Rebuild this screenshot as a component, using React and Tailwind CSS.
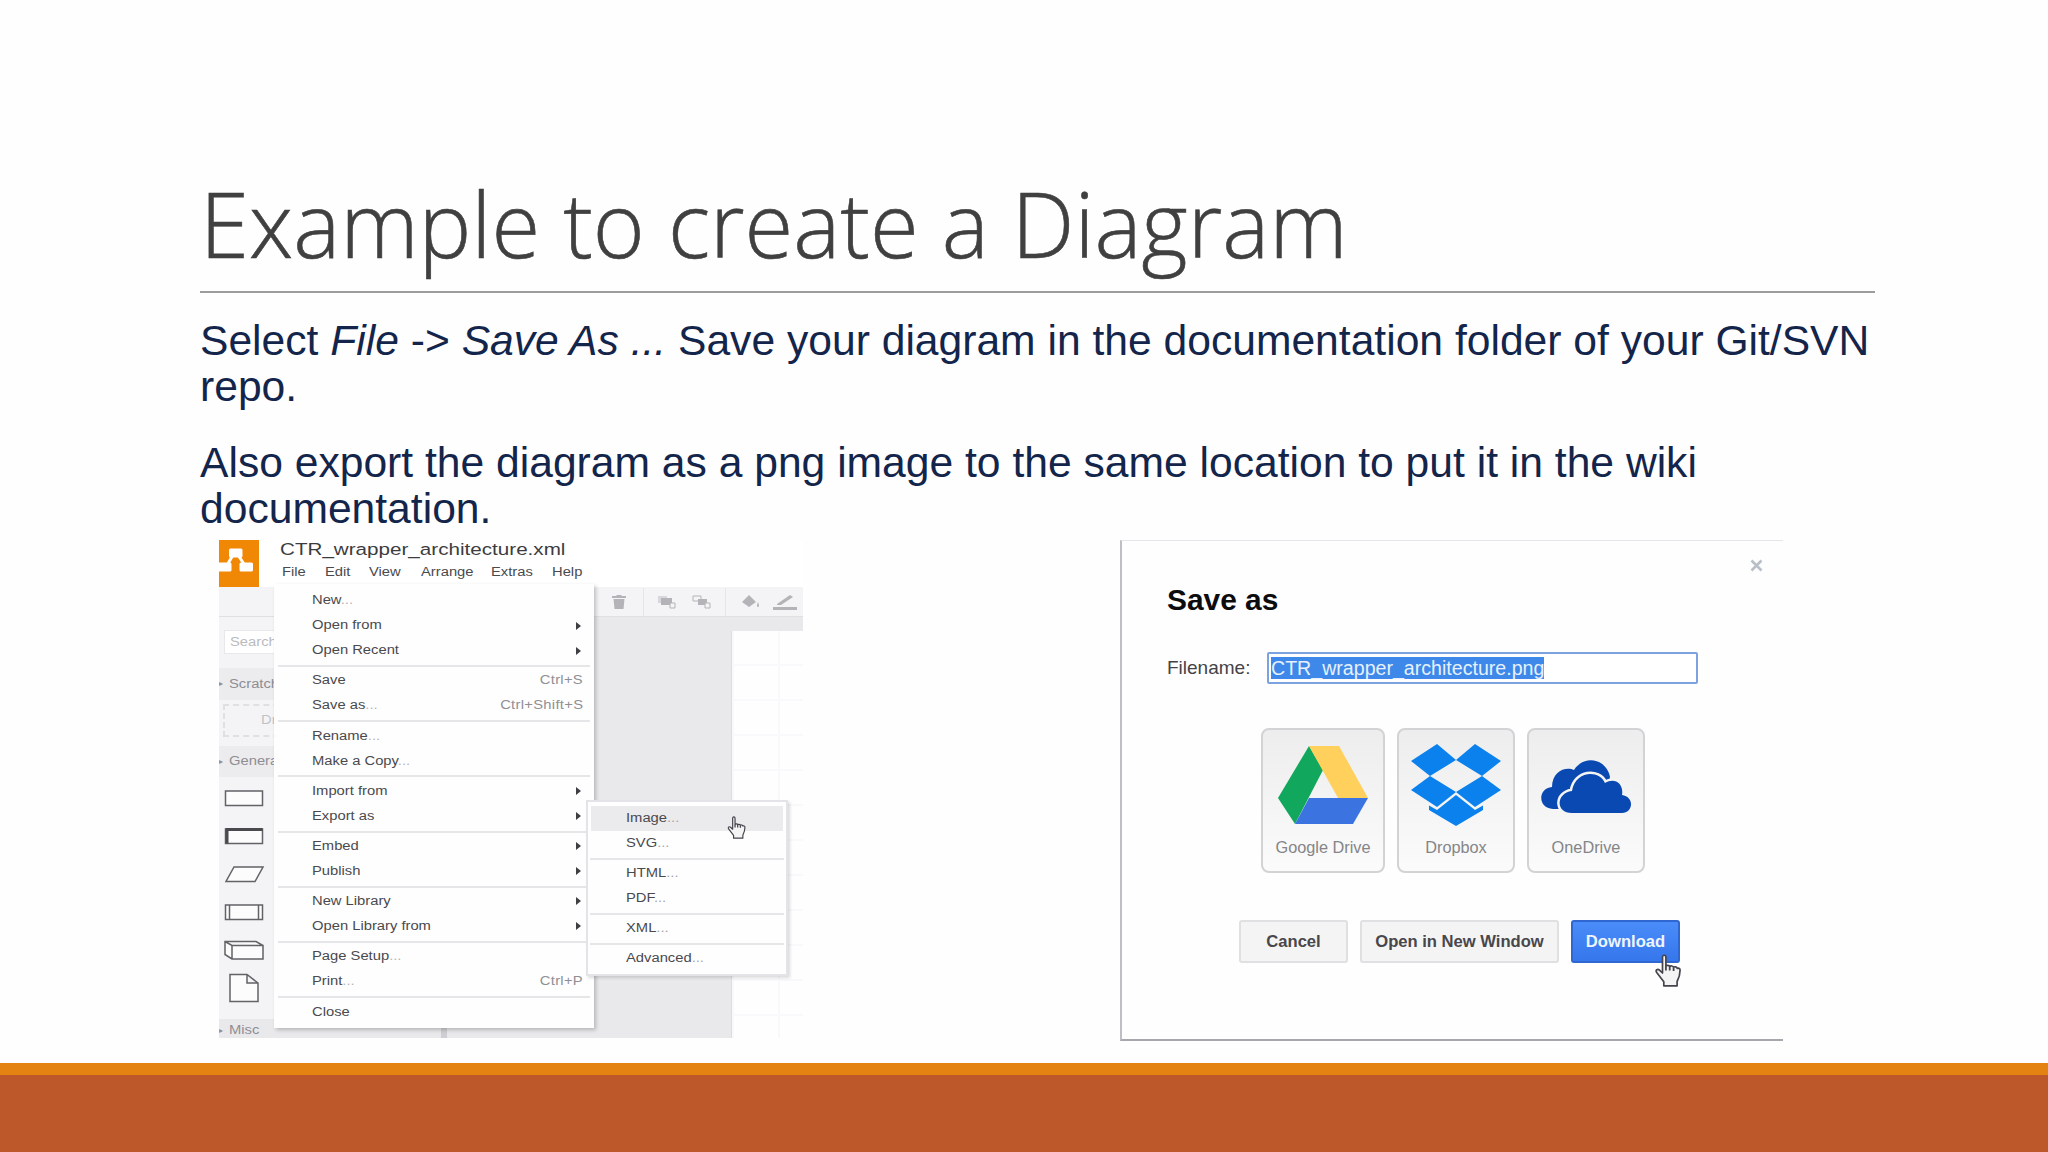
const menuGroups = [
  [{ label: "New", dots: true }, { label: "Open from", sub: true }, { label: "Open Recent", sub: true }],
  [{ label: "Save", keys: "Ctrl+S" }, { label: "Save as", dots: true, keys: "Ctrl+Shift+S" }],
  [{ label: "Rename", dots: true }, { label: "Make a Copy", dots: true }],
  [{ label: "Import from", sub: true }, { label: "Export as", sub: true }],
  [{ label: "Embed", sub: true }, { label: "Publish", sub: true }],
  [{ label: "New Library", sub: true }, { label: "Open Library from", sub: true }],
  [{ label: "Page Setup", dots: true }, { label: "Print", dots: true, keys: "Ctrl+P" }],
  [{ label: "Close" }],
];

const exportGroups = [["Image", "SVG"], ["HTML", "PDF"], ["XML"], ["Advanced"]];

// Wide text used all over the editor
function Wide({ children, className = "" }) {
  return (
    <span className={`inline-block origin-left scale-x-[1.2] whitespace-nowrap ${className}`}>{children}</span>
  );
}

function HandCursor({ className }) {
  return (
    <svg viewBox="0 0 27 33" className={className}>
      <path
        d="M8 3.2c0-2.6 3.400-2.6 3.400 0v9.200c.3-1.400 3.600-1.400 3.800.2.600-1 3.600-.8 3.900.7.8-1 3.300-.5 3.600 1.100 1-.6 2.900 0 2.900 1.600 0 5-1.200 8-3 11.500v4.300H9.300v-4L2.200 18.400c-1.600-2.300 1-3.900 2.800-2.200l3 2.800z"
        fill="#f4f4f4"
        stroke="#44444c"
        strokeWidth="1.7"
        strokeLinejoin="round"
      />
      <path d="M11.400 12.400v4M15.2 12.600v4M19.1 13.400v3.600" stroke="#44444c" strokeWidth="1.8" fill="none" />
    </svg>
  );
}

function FileMenu() {
  return (
    <div className="absolute left-[55px] top-[44px] w-[320px] h-[444px] bg-[#fefefe] pt-[4px] shadow-[2px_2px_4px_rgba(0,0,0,0.22)]">
      {menuGroups.map((group, i) => (
        <div key={i}>
          {i > 0 && <div className="mx-1 mt-[2px] mb-[1.2px] h-[2px] bg-[#e6e5e8]" />}
          {group.map((item) => (
            <div key={item.label} className="flex h-[25px] items-center justify-between pl-[37.500px] pr-[11px]">
              <Wide className="text-[#4a4a4e]">
                {item.label}
                {item.dots && <span className="text-[#b5b5b9]">...</span>}
              </Wide>
              {item.keys && (
                <span className="inline-block origin-right scale-x-[1.2] tracking-[0.25px] text-[#8f8f94]">
                  {item.keys}
                </span>
              )}
              {item.sub && (
                <svg viewBox="0 0 5 8" className="mr-[2px] h-2 w-[5px]">
                  <path d="M0 0L5 4L0 8Z" fill="#3f3f43" />
                </svg>
              )}
            </div>
          ))}
        </div>
      ))}
    </div>
  );
}

function ExportMenu() {
  return (
    <div className="absolute left-[367px] top-[260px] w-[202px] h-[176px] border-2 border-[#e4e3e7] bg-[#fefefe] pt-[3.500px] shadow-[2px_2px_3px_rgba(0,0,0,0.14)]">
      {exportGroups.map((group, i) => (
        <div key={i}>
          {i > 0 && <div className="mx-[2px] mt-[2px] mb-[1.2px] h-[2px] bg-[#e6e5e8]" />}
          {group.map((label) => (
            <div
              key={label}
              className={`mx-[3px] flex h-[25px] items-center pl-[34.500px] ${label === "Image" ? "bg-[#ebeaed]" : ""}`}
            >
              <Wide className="text-[#4a4a4e]">
                {label}
                <span className="text-[#a5a5a9]">...</span>
              </Wide>
            </div>
          ))}
        </div>
      ))}
      <HandCursor className="absolute left-[138px] top-[14px] h-[23px] w-[21px]" />
    </div>
  );
}

function Toolbar() {
  return (
    <div className="flex h-[30px] items-center border-b border-[#e0dfe3] bg-[#f4f3f6] pl-[392px] text-[#b4b4b8]">
      <svg viewBox="0 0 16 16" className="h-4 w-4" fill="currentColor">
        <path d="M1 2h4l1-1h4l1 1h4v2H1zM2.500 5h11l-1 10h-9z" />
      </svg>
      <div className="ml-[16px] h-7 w-px bg-[#e6e5e9]" />
      <svg viewBox="0 0 20 16" className="ml-[13px] h-4 w-5">
        <path d="M1 2h9v7H1z" fill="#d8d8dc" />
        <path d="M4 4h11v7H4z" fill="currentColor" />
        <path d="M13 9h5v5h-5z" fill="#f4f3f6" stroke="currentColor" />
      </svg>
      <svg viewBox="0 0 20 16" className="ml-[15px] h-4 w-5">
        <path d="M1 2h8v5H1z" fill="#f4f3f6" stroke="currentColor" />
        <path d="M6 5h9v6H6z" fill="currentColor" />
        <path d="M13 9h5v5h-5z" fill="#f4f3f6" stroke="currentColor" />
      </svg>
      <div className="ml-[13px] h-7 w-px bg-[#e6e5e9]" />
      <svg viewBox="0 0 20 16" className="ml-[14px] h-4 w-5" fill="currentColor">
        <path d="M9 1L16 8L9 13L2 8zM18 8q2 5 0 5t0-5z" />
      </svg>
      <svg viewBox="0 0 24 16" className="ml-[13px] h-4 w-6" fill="currentColor">
        <path d="M4 10L17 1L20 3L8 11H4zM0 13h24v3H0z" />
      </svg>
    </div>
  );
}

function Sidebar() {
  return (
    <div className="w-[222px] shrink-0 bg-[#f4f4f6] text-[#8e8e93]">
      <div className="ml-[5px] mt-[13px] flex h-[24px] items-center border border-[#e8e8eb] bg-white pl-[5px] text-[#bbbbc0]">
        <Wide>Search</Wide>
      </div>
      <div className="mt-[14px] flex h-[32px] items-center bg-[#ecebee]">
        <span className="w-[10px] text-[8px]">▸</span>
        <Wide>Scratchpad</Wide>
      </div>
      <div className="ml-[4px] mt-[4px] flex h-[33px] items-center border-2 border-dashed border-[#e0e0e3] pl-[36px] text-[#c2c2c6]">
        <Wide>Drag</Wide>
      </div>
      <div className="mt-[9px] flex h-[31px] items-center bg-[#ecebee]">
        <span className="w-[10px] text-[8px]">▸</span>
        <Wide>General</Wide>
      </div>
      <svg
        viewBox="0 1 55 242"
        className="h-[242px] w-[55px]"
        fill="#fcfcfd"
        stroke="#626267"
        strokeWidth="1.500"
      >
        <rect x="6.500" y="15" width="37" height="14.500" />
        <rect x="6.500" y="53" width="37" height="14.500" />
        <path d="M8 53v14.500M6.500 53.500h37" strokeWidth="3" stroke="#4a4a4e" />
        <path d="M15 91h29L36 105.500H7z" />
        <path d="M6.500 129h37v14.500h-37zM10.500 129v14.500M39.500 129v14.500" />
        <path d="M6 165.500h31l7 4v13.500H13l-7-4.500zM6 165.500l7 4h31M13 169.500v13.500" />
        <path d="M11 198.500h17l11 8.500v18.500H11zM28 198.500v8.500h11" />
      </svg>
      <div className="flex h-[21px] items-center bg-[#e9e8eb] pt-[2px]">
        <span className="w-[10px] text-[8px]">▸</span>
        <Wide>Misc</Wide>
      </div>
    </div>
  );
}

function DiagramEditor() {
  return (
    <div className="relative flex h-[498px] w-[584px] flex-col font-['Liberation_Sans',Arial,sans-serif] text-[12.3px]">
      <div className="flex h-[47px] shrink-0 bg-white">
        <svg viewBox="0 0 40 47" className="h-[47px] w-10 shrink-0">
          <rect width="40" height="47" fill="#f08705" />
          <path d="M14 15L7 27M19 15L27 27" stroke="#fff" strokeWidth="3" />
          <rect x="10" y="8.500" width="13.500" height="9" rx="1.500" fill="#fff" />
          <rect x="-1" y="22.500" width="13.500" height="9" rx="1.500" fill="#fff" />
          <rect x="20.500" y="22.500" width="13.500" height="9" rx="1.500" fill="#fff" />
        </svg>
        <div className="pl-[21px]">
          <div className="h-[20px] text-[17.2px] leading-[18px] text-[#3c3c40]">
            <Wide>CTR_wrapper_architecture.xml</Wide>
          </div>
          <div className="flex h-6 items-center pl-[2px] text-[#4a4a4e]">
            <Wide className="w-[43px]">File</Wide>
            <Wide className="w-[43.500px]">Edit</Wide>
            <Wide className="w-[52px]">View</Wide>
            <Wide className="w-[70px]">Arrange</Wide>
            <Wide className="w-[61px]">Extras</Wide>
            <Wide>Help</Wide>
          </div>
        </div>
      </div>
      <Toolbar />
      <div className="flex min-h-0 flex-1 overflow-hidden">
        <Sidebar />
        <div className="w-[6px] shrink-0 bg-[#cfced2]" />
        <div className="flex-1 bg-[#e9e8eb] pl-[284px] pt-[14px]">
          <div className="h-full border-l border-[#dddce0] bg-[#fefefe] bg-[linear-gradient(#f9f9fb_2px,transparent_2px),linear-gradient(90deg,#f9f9fb_2px,transparent_2px)] bg-[size:46px_35px] bg-position-[0_-2px]" />
        </div>
      </div>
      <FileMenu />
      <ExportMenu />
    </div>
  );
}

function DriveLogo() {
  return (
    <svg viewBox="0 0 90 78" className="h-[78px] w-[90px]">
      <path d="M31 0L45 24L17 78L0 52Z" fill="#11a75c" />
      <path d="M31 0H61L90 52H60Z" fill="#ffd05c" />
      <path d="M31 52H90L75 78H17Z" fill="#3b74e0" />
    </svg>
  );
}

function DropboxLogo() {
  return (
    <svg viewBox="0 0 90 82" className="h-[82px] w-[90px]" fill="#0b81ee">
      <path d="M26 0L45 16L19 32L0 17Z" />
      <path d="M64 0L90 17L71 32L45 16Z" />
      <path d="M19 32L45 48L26 63L0 46Z" />
      <path d="M71 32L90 46L64 63L45 48Z" />
      <path d="M45 51L64 66L72 61.500V66L45 82L18 66V61.500L26 66Z" />
    </svg>
  );
}

function OneDriveLogo() {
  return (
    <svg viewBox="0 0 90 54" className="mt-[3px] h-[54px] w-[90px]" fill="#0a48b2">
      <path d="M12 49C-4 48-3 28 11 27C11 11 25 6 33 10C43-6 66-1 69 17L66 30L30 49Z" />
      <path
        d="M31 53C14 53 15 33 31 31C34 11 58 9 64 23C74 17 83 24 81 35C94 37 92 53 81 53Z"
        stroke="#f4f4f4"
        strokeWidth="5"
        paintOrder="stroke"
      />
    </svg>
  );
}

function StorageCard({ label, className, children }) {
  return (
    <div
      className={`flex h-[145px] flex-col items-center rounded-lg border-2 border-[#d3d2d5] bg-linear-to-b from-[#ededee] to-[#fbfbfb] ${className}`}
    >
      <div className="flex h-[105px] items-center pt-[5px]">{children}</div>
      <div className="text-[16.3px] leading-6 text-[#858588] whitespace-nowrap">{label}</div>
    </div>
  );
}

function SaveDialog() {
  return (
    <div className="flex h-[501px] w-[663px] flex-col border-b-2 border-l-2 border-t border-b-[#a9a7ad] border-l-[#c0bec4] border-t-[#e6e5ea] bg-[#fefefe] font-['Liberation_Sans',Arial,sans-serif]">
      <div className="flex h-[45px] items-end justify-end pr-[20px]">
        <svg viewBox="0 0 13 13" className="mb-[14px] h-[13px] w-[13px]">
          <path d="M1.500 1.500L11.500 11.500M11.500 1.500L1.500 11.500" stroke="#b9bfc6" strokeWidth="2.600" />
        </svg>
      </div>
      <div className="pl-[45px] text-[29.900px] font-bold leading-[27px] text-[#0c0c0e]">Save as</div>
      <div className="mt-[39px] flex h-8 items-center pl-[45px]">
        <div className="w-[100px] pt-px text-[19px] text-[#444347]">Filename:</div>
        <div className="flex h-8 w-[431px] items-center rounded-[2px] border-2 border-[#7da2e0] bg-white pl-[2px]">
          <span className="bg-[#3d88e8] text-[19.6px] leading-[22px] text-[#e6f1fd]">CTR_wrapper_architecture.png</span>
        </div>
      </div>
      <div className="mt-[44px] flex gap-[12px] pl-[139px]">
        <StorageCard label="Google Drive" className="w-[124px]">
          <DriveLogo />
        </StorageCard>
        <StorageCard label="Dropbox" className="w-[118px]">
          <DropboxLogo />
        </StorageCard>
        <StorageCard label="OneDrive" className="w-[118px]">
          <OneDriveLogo />
        </StorageCard>
      </div>
      <div className="mt-[47px] flex h-[43px] gap-[12px] pl-[117px] text-[16.6px] font-bold text-[#48474b]">
        <button className="w-[109px] rounded-[3px] border-2 border-[#e0dfe2] bg-[#f5f4f5] pt-px">Cancel</button>
        <button className="w-[199px] rounded-[3px] border-2 border-[#e0dfe2] bg-[#f5f4f5] pt-px whitespace-nowrap">
          Open in New Window
        </button>
        <button className="relative w-[109px] rounded-[3px] border-2 border-[#2f66cf] bg-linear-to-b from-[#4a8cf8] to-[#3577ec] pt-px text-[#eef5ff]">
          Download
          <HandCursor className="absolute left-[81px] top-[32px] h-[33px] w-[28px]" />
        </button>
      </div>
    </div>
  );
}

export default function App() {
  return (
    <div className="flex h-[1152px] w-[2048px] flex-col overflow-hidden bg-[#fefefe]">
      <header className="ml-[200px] mt-[160px] h-[133px] w-[1675px] shrink-0 border-b-2 border-[#9c9c9c]">
        <h1 className="inline-block origin-left scale-x-[0.975] whitespace-nowrap font-['Open_Sans',sans-serif] text-[91px] font-light leading-[126px] text-[#404040] [-webkit-text-stroke:0.6px_#404040]">
          Example to create a Diagram
        </h1>
      </header>

      <div className="ml-[200px] mt-[24px] flex h-[223px] w-[1700px] shrink-0 flex-col gap-[30px] font-['Liberation_Sans',Arial,sans-serif] text-[42.61px] leading-[46px] text-[#14254b]">
        <p>
          Select <i>File</i> -&gt; <i>Save As ...</i> Save your diagram in the documentation folder of your Git/SVN
          <br />
          repo.
        </p>
        <p>
          Also export the diagram as a png image to the same location to put it in the wiki
          <br />
          documentation.
        </p>
      </div>

      <div className="ml-[219px] flex gap-[317px]">
        <DiagramEditor />
        <SaveDialog />
      </div>

      <footer className="mt-auto h-[89px] shrink-0 border-t-12 border-[#e48312] bg-[#bd582a]" />
    </div>
  );
}
